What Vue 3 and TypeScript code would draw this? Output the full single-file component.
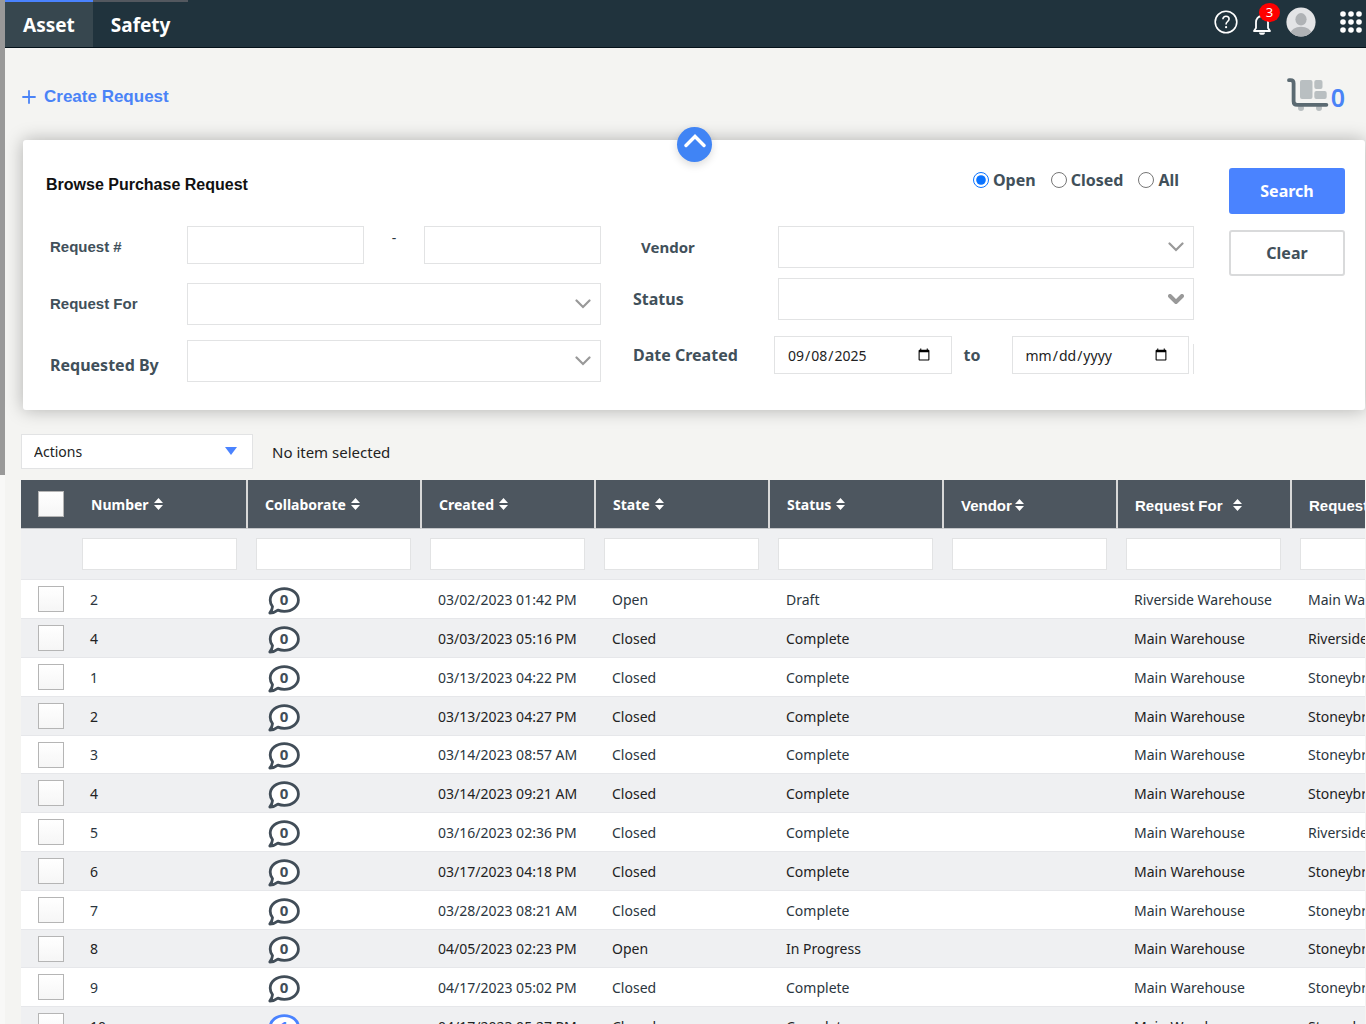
<script setup lang="ts">
import { computed, ref } from 'vue'

interface PurchaseRequest {
  id: number
  number: number
  comments: number
  created: string
  state: string
  status: string
  vendor: string
  requestFor: string
  requestFrom: string
}

interface Column {
  key: string
  title: string
  plain?: boolean
  gap?: 'tight'
}

const columns: Column[] = [
  { key: 'number', title: 'Number' },
  { key: 'comments', title: 'Collaborate' },
  { key: 'created', title: 'Created' },
  { key: 'state', title: 'State' },
  { key: 'status', title: 'Status' },
  { key: 'vendor', title: 'Vendor', plain: true, gap: 'tight' },
  { key: 'requestFor', title: 'Request For', plain: true },
  { key: 'requestFrom', title: 'Request From', plain: true },
]

const main = 'Main Warehouse'
const river = 'Riverside Warehouse'
const stone = 'Stoneybrook'

const source: [number, number, string, string, string, string, string][] = [
  [2, 0, '03/02/2023 01:42 PM', 'Open', 'Draft', river, main],
  [4, 0, '03/03/2023 05:16 PM', 'Closed', 'Complete', main, river],
  [1, 0, '03/13/2023 04:22 PM', 'Closed', 'Complete', main, stone],
  [2, 0, '03/13/2023 04:27 PM', 'Closed', 'Complete', main, stone],
  [3, 0, '03/14/2023 08:57 AM', 'Closed', 'Complete', main, stone],
  [4, 0, '03/14/2023 09:21 AM', 'Closed', 'Complete', main, stone],
  [5, 0, '03/16/2023 02:36 PM', 'Closed', 'Complete', main, river],
  [6, 0, '03/17/2023 04:18 PM', 'Closed', 'Complete', main, stone],
  [7, 0, '03/28/2023 08:21 AM', 'Closed', 'Complete', main, stone],
  [8, 0, '04/05/2023 02:23 PM', 'Open', 'In Progress', main, stone],
  [9, 0, '04/17/2023 05:02 PM', 'Closed', 'Complete', main, stone],
  [10, 1, '04/17/2023 05:27 PM', 'Closed', 'Complete', main, stone],
]

const rows: PurchaseRequest[] = source.map((r, id) => ({
  id,
  number: r[0],
  comments: r[1],
  created: r[2],
  state: r[3],
  status: r[4],
  vendor: '',
  requestFor: r[5],
  requestFrom: r[6],
}))

const states = ['Open', 'Closed', 'All']
const stateFilter = ref('Open')
const dateFrom = ref('2025-09-08')
const dateTo = ref('')
const selected = ref<number[]>([])

const allSelected = computed({
  get: () => selected.value.length === rows.length,
  set: (on: boolean) => {
    selected.value = on ? rows.map((r) => r.id) : []
  },
})

const selectionText = computed(() =>
  selected.value.length ? `${selected.value.length} selected` : 'No item selected',
)
</script>

<template>
  <div class="shell">
    <div class="rail"><div class="rail-thumb"></div></div>
    <div class="page">
      <header class="topbar">
        <nav class="tabs">
          <a href="#asset" class="tab active">Asset</a>
          <a href="#safety" class="tab">Safety</a>
        </nav>
        <div class="tools">
          <button class="icon-btn" aria-label="Help">
            <svg width="24" height="24" viewBox="0 0 24 24" fill="none" stroke="#fff">
              <circle cx="12" cy="12" r="10.8" stroke-width="1.6" />
              <path d="M8.9 9.3c0-1.9 1.3-3 3.1-3s3.1 1.1 3.1 2.8c0 2.3-3 2.5-3 4.9v.6" stroke-width="1.6" />
              <circle cx="12.1" cy="17.2" r="1.1" fill="#fff" stroke="none" />
            </svg>
          </button>
          <button class="icon-btn bell" aria-label="Notifications">
            <svg width="20" height="22" viewBox="0 0 20 22" fill="none">
              <path d="M4 15V9.5C4 5.8 6.2 3 10 3s6 2.800 6 6.500V15l2 3H2z" stroke="#fff" stroke-width="1.8" stroke-linejoin="round" />
              <path d="M7 19.4h6a3 2.4 0 0 1-6 0z" fill="#fff" />
            </svg>
            <span class="badge">3</span>
          </button>
          <button class="icon-btn" aria-label="Profile">
            <svg width="30" height="30" viewBox="0 0 30 30">
              <defs><clipPath id="face"><circle cx="15" cy="15" r="14.6" /></clipPath></defs>
              <g clip-path="url(#face)">
                <rect width="30" height="30" fill="#e3e4e6" />
                <ellipse cx="15" cy="12.3" rx="5.6" ry="6.2" fill="#afb2b5" />
                <ellipse cx="15" cy="26.5" rx="10.4" ry="6.8" fill="#afb2b5" />
              </g>
            </svg>
          </button>
          <button class="icon-btn apps" aria-label="Applications">
            <svg width="22" height="22" viewBox="0 0 22 22" fill="#fff">
              <template v-for="y in 3" :key="y">
                <circle v-for="x in 3" :key="x" :cx="x * 8 - 5" :cy="y * 8 - 5" r="2.8" />
              </template>
            </svg>
          </button>
        </div>
      </header>

      <div class="toolbar">
        <a href="#create" class="create">
          <svg width="14" height="14" viewBox="0 0 14 14" stroke="#4a83f7" stroke-width="1.8" stroke-linecap="round">
            <path d="M7 1v12M1 7h12" />
          </svg>
          Create Request
        </a>
        <a href="#cart" class="cart">
          <svg width="42" height="38" viewBox="0 0 42 38" fill="none">
            <rect x="13" y="2" width="12.5" height="19" rx="2" fill="#b9bfc1" />
            <rect x="27.3" y="2" width="8.2" height="9" rx="2" fill="#b9bfc1" />
            <rect x="27.3" y="13" width="12.4" height="8" rx="2" fill="#b9bfc1" />
            <circle cx="14" cy="30" r="3" fill="#b9bfc1" />
            <circle cx="32" cy="30" r="3" fill="#b9bfc1" />
            <path d="M2 2.2h1.6q3 0 3 3v18q0 3.6 3.6 3.6H39.4" stroke="#5b6a72" stroke-width="3.8" stroke-linecap="round" />
          </svg>
          <span>0</span>
        </a>
      </div>

      <section class="panel">
        <button class="collapse" aria-label="Collapse filters">
          <svg width="22" height="14" viewBox="0 0 22 14" fill="none" stroke="#fff" stroke-width="3.4" stroke-linecap="round">
            <path d="M2 11.5l9-9 9 9" />
          </svg>
        </button>
        <div class="filters">
          <div class="filters-head">
            <h1>Browse Purchase Request</h1>
            <div class="radios">
              <label v-for="s in states" :key="s" class="radio">
                <input v-model="stateFilter" type="radio" name="state" :value="s" />{{ s }}
              </label>
            </div>
          </div>
          <div class="forms">
            <div class="form left">
              <div class="row">
                <label for="req-from" class="plain">Request #</label>
                <input id="req-from" type="text" class="box" />
                <span class="dash">-</span>
                <input type="text" class="box" aria-label="Request # to" />
              </div>
              <div class="row">
                <label for="req-for" class="plain">Request For</label>
                <div class="select">
                  <select id="req-for"><option></option></select>
                  <svg class="caret" viewBox="0 0 16 10"><path d="M1.5 1.5L8 8l6.5-6.5" /></svg>
                </div>
              </div>
              <div class="row">
                <label for="req-by" class="low">Requested By</label>
                <div class="select">
                  <select id="req-by"><option></option></select>
                  <svg class="caret" viewBox="0 0 16 10"><path d="M1.5 1.5L8 8l6.5-6.5" /></svg>
                </div>
              </div>
            </div>
            <div class="form right">
              <div class="row">
                <label for="vendor" class="indent">Vendor</label>
                <div class="select">
                  <select id="vendor"><option></option></select>
                  <svg class="caret" viewBox="0 0 16 10"><path d="M1.5 1.5L8 8l6.5-6.5" /></svg>
                </div>
              </div>
              <div class="row">
                <label for="status">Status</label>
                <div class="select">
                  <select id="status"><option></option></select>
                  <svg class="caret heavy" viewBox="0 0 16 10"><path d="M2 2l6 6 6-6" /></svg>
                </div>
              </div>
              <div class="row dates">
                <label for="date-from">Date Created</label>
                <input id="date-from" v-model="dateFrom" type="date" class="box" />
                <label for="date-to" class="to">to</label>
                <input id="date-to" v-model="dateTo" type="date" class="box" />
                <span class="edge"></span>
              </div>
            </div>
          </div>
        </div>
        <div class="buttons">
          <button class="btn primary">Search</button>
          <button class="btn">Clear</button>
        </div>
      </section>

      <div class="bulk">
        <div class="select actions">
          <select aria-label="Actions"><option>Actions</option></select>
          <svg class="tri" viewBox="0 0 12 8"><path d="M0 0h12L6 8z" /></svg>
        </div>
        <span>{{ selectionText }}</span>
      </div>

      <div class="table-wrap">
        <table>
          <colgroup>
            <col class="c-check" />
            <col v-for="c in columns" :key="c.key" class="c-data" />
          </colgroup>
          <thead>
            <tr class="titles">
              <th class="check"><input v-model="allSelected" type="checkbox" aria-label="Select all" /></th>
              <th v-for="c in columns" :key="c.key" :class="{ plain: c.plain, tight: c.gap === 'tight' }">
                <button class="sort">
                  {{ c.title }}
                  <svg width="9" height="12" viewBox="0 0 9 12" fill="#fff"><path d="M4.5 0L9 5H0zM4.5 12L9 7H0z" /></svg>
                </button>
              </th>
            </tr>
            <tr class="search">
              <td></td>
              <td v-for="c in columns" :key="c.key"><input type="text" :aria-label="`Filter ${c.title}`" /></td>
            </tr>
          </thead>
          <tbody>
            <tr v-for="r in rows" :key="r.id">
              <td class="check">
                <input v-model="selected" type="checkbox" :value="r.id" :aria-label="`Select request ${r.number}`" />
              </td>
              <td>{{ r.number }}</td>
              <td class="talk">
                <button :class="{ unread: r.comments > 0 }" :aria-label="`${r.comments} comments`">
                  <svg width="32" height="28" viewBox="0 0 32 28">
                    <path
                      d="M16.3 1.6C24.2 1.6 30.4 6.6 30.4 13S24.2 24.3 16.3 24.3C14 24.3 11.8 23.9 9.9 23.1C7.7 24.8 5 26 1.8 26C3.3 24.3 4.3 22.2 4.5 19.6C3 17.7 2.2 15.4 2.2 13C2.2 6.6 8.4 1.6 16.3 1.6Z"
                      fill="#fff" stroke="currentColor" stroke-width="2.8" stroke-linejoin="round"
                    />
                    <text x="16" y="18" text-anchor="middle" fill="currentColor">{{ r.comments }}</text>
                  </svg>
                </button>
              </td>
              <td>{{ r.created }}</td>
              <td>{{ r.state }}</td>
              <td>{{ r.status }}</td>
              <td>{{ r.vendor }}</td>
              <td>{{ r.requestFor }}</td>
              <td>{{ r.requestFrom }}</td>
            </tr>
          </tbody>
        </table>
      </div>
    </div>
  </div>
</template>

<style>
body {
  background: #f4f4f2;
}
</style>

<style scoped>
* {
  box-sizing: border-box;
}
.shell {
  display: flex;
  height: 100vh;
  overflow: hidden;
  background: #f4f4f2;
  font-family: 'Noto Sans', 'Open Sans', sans-serif;
  font-size: 14px;
  color: #2b3640;
}
button,
input,
select {
  font: inherit;
  color: inherit;
  margin: 0;
}
button {
  cursor: pointer;
  border: 0;
  padding: 0;
  background: none;
}
a {
  text-decoration: none;
}
svg {
  display: block;
}
.rail {
  flex: none;
  width: 5px;
  background: #f8f8f7;
}
.rail-thumb {
  height: 475px;
  background: #999;
}
.page {
  flex: 1;
  min-width: 0;
  display: flex;
  flex-direction: column;
}
.topbar {
  flex: none;
  height: 48px;
  display: flex;
  justify-content: space-between;
  background: #20333d;
  border-bottom: 1px solid #05121a;
}
.tabs {
  display: flex;
}
.tab {
  padding: 0 18px;
  border-top: 2px solid #53585f;
  color: #fff;
  font-size: 19px;
  font-weight: 700;
  line-height: 46px;
}
.tab.active {
  background: #37474f;
  border-top-color: #4a83ff;
}
.tools {
  display: flex;
  align-items: center;
  gap: 14px;
  padding: 0 4px 3px 0;
}
.bell {
  position: relative;
  padding-top: 4px;
}
.badge {
  position: absolute;
  left: 7px;
  top: -6px;
  width: 21px;
  height: 19px;
  border-radius: 50%;
  background: #f00;
  color: #fff;
  font-size: 13px;
  line-height: 19px;
}
.apps {
  margin-left: 10px;
}
.toolbar {
  flex: none;
  height: 92px;
  display: flex;
  justify-content: space-between;
  align-items: center;
  padding: 6px 21px 0 17px;
}
.create {
  display: flex;
  align-items: center;
  gap: 8px;
  color: #4a83f7;
  font: 700 17px 'Liberation Sans', Arial, sans-serif;
}
.cart {
  display: flex;
  align-items: center;
  gap: 2px;
  color: #4a83f7;
  font-size: 25px;
  font-weight: 600;
  line-height: 34px;
}
.panel {
  position: relative;
  flex: none;
  display: flex;
  gap: 35px;
  margin: 0 1px 0 18px;
  padding: 28px 20px 28px 23px;
  background: #fff;
  border-radius: 3px;
  box-shadow: 0 0 18px rgba(0, 0, 0, 0.28);
}
.collapse {
  position: absolute;
  left: 50%;
  top: -13px;
  width: 35px;
  height: 35px;
  margin-left: -17px;
  padding-bottom: 7px;
  display: flex;
  align-items: center;
  justify-content: center;
  border-radius: 50%;
  background: #4084f5;
  box-shadow: 0 3px 8px rgba(0, 0, 0, 0.15);
}
.filters {
  flex: 1;
  min-width: 0;
}
.filters-head {
  height: 58px;
  display: flex;
  justify-content: space-between;
  align-items: flex-start;
}
h1 {
  margin: 0;
  color: #111;
  font: 700 16px/34px 'Liberation Sans', Arial, sans-serif;
}
.radios {
  display: flex;
  gap: 15px;
  padding-right: 15px;
}
.radio,
.row label {
  color: #41505a;
  font-size: 16px;
  font-weight: 700;
}
.radio {
  display: flex;
  align-items: center;
  gap: 4px;
  line-height: 24px;
}
.radio input {
  width: 16px;
  height: 16px;
  accent-color: #0a73ff;
}
.forms {
  display: grid;
  grid-template-columns: minmax(0, 555fr) minmax(0, 562fr);
  gap: 31px;
}
.form {
  display: flex;
  flex-direction: column;
}
.left {
  gap: 15px;
}
.right {
  gap: 10px;
}
.row {
  display: flex;
  align-items: flex-start;
}
.row label {
  flex: none;
  line-height: 42px;
}
.left label {
  width: 141px;
  padding-left: 4px;
}
.right label {
  width: 146px;
  padding-left: 1px;
}
.left .plain {
  font: 700 15px/42px 'Liberation Sans', Arial, sans-serif;
}
.row .low {
  align-self: flex-end;
  line-height: 34px;
}
.right .indent {
  padding-left: 9px;
  font-size: 15px;
}
.dash {
  width: 60px;
  text-align: center;
  line-height: 24px;
}
.box {
  flex: 1;
  min-width: 0;
  height: 38px;
  padding: 0 18px 0 12px;
  border: 1px solid #e2e3e4;
  background: #fff;
  color: #222;
}
.select {
  position: relative;
  flex: 1;
  height: 42px;
}
.select select {
  width: 100%;
  height: 100%;
  padding: 0 12px;
  appearance: none;
  border: 1px solid #e2e3e4;
  border-radius: 0;
  background: #fff;
}
.caret {
  position: absolute;
  right: 10px;
  top: 16px;
  width: 16px;
  height: 10px;
  fill: none;
  stroke: #999;
  stroke-width: 2.2;
  stroke-linecap: round;
  pointer-events: none;
}
.heavy {
  stroke-width: 4;
}
.dates {
  margin-top: 6px;
}
.right .dates label {
  width: 142px;
  line-height: 38px;
}
.right .dates .to {
  width: 60px;
  padding-left: 12px;
}
.edge {
  align-self: flex-end;
  width: 1px;
  height: 30px;
  margin-left: 4px;
  background: #e2e3e4;
}
.buttons {
  flex: none;
  width: 116px;
  display: flex;
  flex-direction: column;
  gap: 16px;
}
.btn {
  height: 46px;
  border: 2px solid #d9dadb;
  border-radius: 3px;
  background: #fff;
  color: #41505a;
  font-size: 16px;
  font-weight: 700;
}
.primary {
  border-color: #4a83ff;
  background: #4a83ff;
  color: #fff;
}
.bulk {
  flex: none;
  display: flex;
  align-items: center;
  gap: 19px;
  padding: 24px 0 11px 16px;
  color: #222;
  font-size: 15px;
}
.actions {
  flex: none;
  width: 232px;
  height: 35px;
  font-size: 14px;
}
.tri {
  position: absolute;
  right: 16px;
  top: 13px;
  width: 12px;
  height: 8px;
  fill: #4a83ff;
  pointer-events: none;
}
.table-wrap {
  flex: 1;
  min-height: 0;
  margin: 0 1px 0 16px;
  overflow: auto;
  scrollbar-width: none;
}
table {
  width: 1445px;
  table-layout: fixed;
  border-collapse: separate;
  border-spacing: 0;
}
.c-check {
  width: 53px;
}
.c-data {
  width: 174px;
}
th {
  height: 49px;
  padding: 0 0 0 17px;
  background: #4d565f;
  border-right: 2px solid #d8d8d8;
  border-bottom: 1px solid #c4c6c9;
  text-align: left;
}
th.check {
  border-right: 0;
}
th.check,
td.check {
  padding: 0 0 0 17px;
}
.sort {
  display: flex;
  align-items: center;
  gap: 5px;
  color: #fff;
  font-weight: 700;
}
.plain .sort {
  gap: 10px;
  padding-top: 2px;
  font: 700 15px 'Liberation Sans', Arial, sans-serif;
}
.tight .sort {
  gap: 3px;
}
.check input {
  display: block;
  width: 26px;
  height: 26px;
  appearance: none;
  border: 1px solid #b5b5b5;
  background: linear-gradient(#fff, #f6f6f6);
}
.check input:checked {
  background: #4a83ff;
}
td {
  padding: 0 0 0 16px;
  white-space: nowrap;
  overflow: hidden;
}
.search td {
  height: 50px;
  padding: 0 11px 0 8px;
  background: #eff0f2;
}
.search input {
  display: block;
  width: 100%;
  height: 32px;
  border: 1px solid #e2e3e4;
  background: #fff;
}
tbody td {
  height: 39px;
  border-top: 1px solid #e6e7ea;
  background: #fff;
}
tbody tr:nth-child(5n) td {
  height: 38px;
}
tbody tr:nth-child(even) td {
  background: #eff0f2;
  color: #222;
}
td.talk {
  padding: 3px 0 0 20px;
}
.talk button {
  display: block;
  color: #414d58;
}
.talk .unread {
  color: #4a83ff;
}
.talk text {
  font-size: 15px;
  font-weight: 700;
}
</style>
